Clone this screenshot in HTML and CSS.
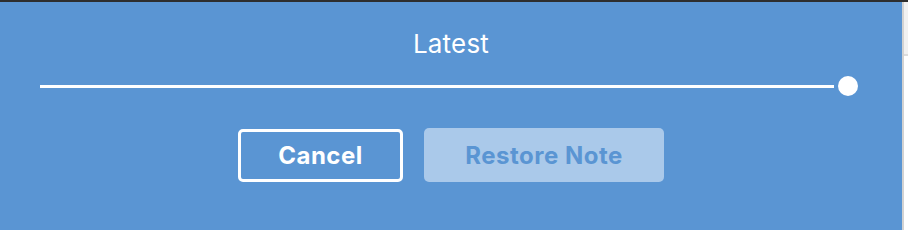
FILE: index.html
```html
<!DOCTYPE html>
<html lang="en">
<head>
    <meta charset="UTF-8">
    <meta name="viewport" content="width=device-width, initial-scale=1.0">
    <title>Revision History</title>
    <link rel="stylesheet" href="styles.css">
</head>
<body>
    <div class="titlebar"></div>
    <div class="window">
        <div class="history-panel">
            <h2 class="revision-label">Latest</h2>
            <div class="slider">
                <div class="slider-track"></div>
                <div class="slider-knob"></div>
            </div>
            <div class="actions">
                <button class="btn btn-cancel">Cancel</button>
                <button class="btn btn-restore" disabled>Restore Note</button>
            </div>
        </div>
        <div class="side-strip">
            <div class="side-top"></div>
        </div>
    </div>
</body>
</html>
```

FILE: styles.css
```css
/* Panel de historial de revisiones */
body {
    margin: 0;
    font-family: Inter, "Open Sans", sans-serif;
    background-color: #fff;
    overflow: hidden;
}
.titlebar {
    height: 2px;
    background-color: #2e2e2e;
}
.window {
    display: flex;
    height: 228px;
}
.history-panel {
    width: 902px;
    background-color: #5a95d3;
    display: flex;
    flex-direction: column;
    align-items: center;
    padding-top: 26px;
    box-sizing: border-box;
}
.revision-label {
    margin: 0;
    font-size: 26px;
    line-height: 32px;
    font-weight: 400;
    letter-spacing: 0.2px;
    color: #fff;
}
.slider {
    display: flex;
    align-items: center;
    width: 818px;
    height: 20px;
    margin: 16px 4px 0 0;
}
.slider-track {
    flex: 1;
    height: 3px;
    background-color: #fff;
}
.slider-knob {
    width: 20px;
    height: 20px;
    margin-left: 4px;
    border-radius: 50%;
    background-color: #fff;
}
.actions {
    display: flex;
    gap: 21px;
    margin-top: 32px;
}
.btn {
    height: 54px;
    border-radius: 5px;
    font-family: inherit;
    font-size: 24px;
    font-weight: 700;
    letter-spacing: 0.5px;
    cursor: pointer;
}
.btn-cancel {
    width: 165px;
    height: 53px;
    margin-top: 1px;
    background-color: transparent;
    border: 3px solid #fff;
    color: #fff;
}
.btn-restore {
    width: 240px;
    background-color: #aac9ea;
    border: none;
    color: #5a95d3;
    cursor: default;
}
.side-strip {
    flex: 1;
    border-left: 2px solid #d2d2d2;
    background-color: #fff;
}
.side-top {
    height: 52px;
    background-color: #f1f1f1;
    border-bottom: 2px solid #dcdcdc;
}
```
